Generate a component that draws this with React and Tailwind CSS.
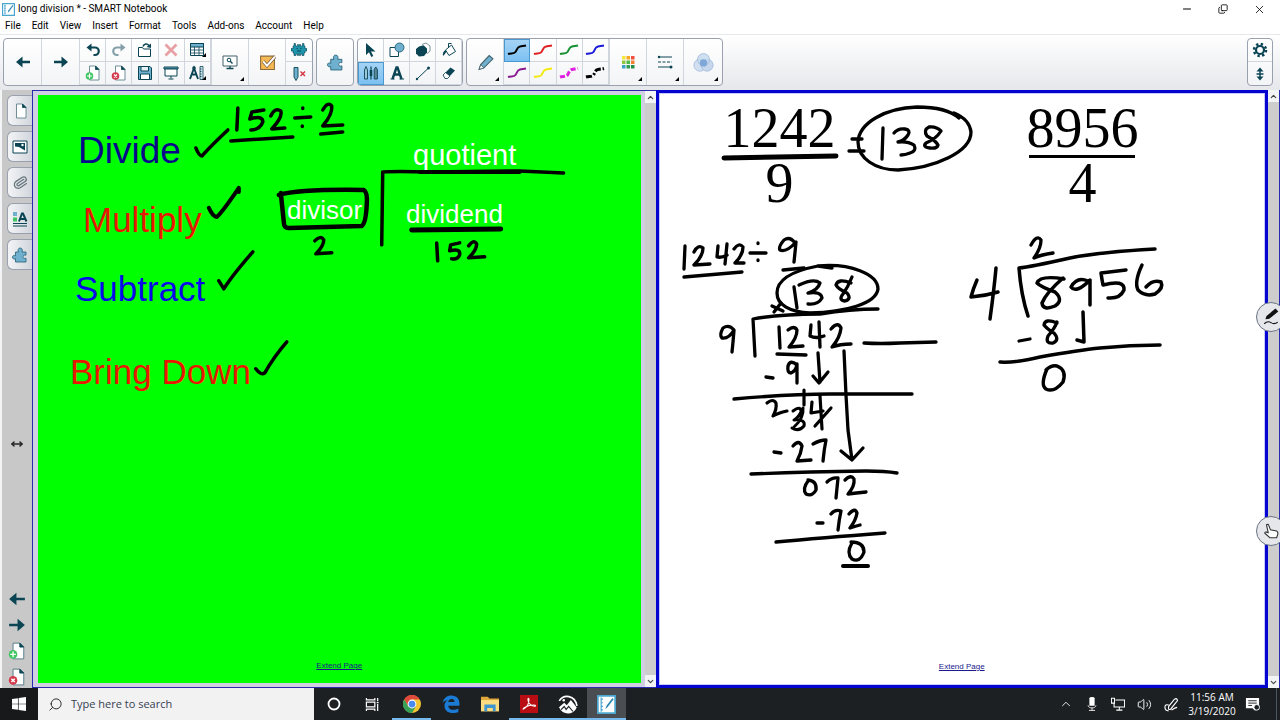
import React, { useState } from "react";
import {
  Minus,
  X,
  Search,
  ChevronUp,
  ChevronDown,
  Copy,
  MoveHorizontal,
  Paperclip,
  Volume2,
} from "lucide-react";

const DARK = "#0b4554";
const BLUE = "#6fb0cf";

/* ---------- small icons ---------- */

const Svg = ({ size = 16, children }) => (
  <svg width={size} height={size} viewBox="0 0 16 16" fill="none" aria-hidden="true">
    {children}
  </svg>
);

const ArrowIcon = ({ right, size = 16 }) => (
  <Svg size={size}>
    <path
      d={right ? "M1 6.8h7.5V2.5L15 8l-6.5 5.5V9.2H1z" : "M15 6.8H7.5V2.5L1 8l6.5 5.5V9.2H15z"}
      fill={DARK}
    />
  </Svg>
);

const UndoIcon = ({ redo }) => (
  <Svg>
    <g transform={redo ? "translate(16 0) scale(-1 1)" : undefined} opacity={redo ? 0.5 : 1}>
      <path d="M6.5 1.5 1.5 5.500l5 4z" fill={DARK} />
      <path d="M5 5.5h5a3.7 3.7 0 0 1 0 7.5H8.5" stroke={DARK} strokeWidth="2.2" />
    </g>
  </Svg>
);

const PageIcon = ({ badge, size = 16 }) => (
  <Svg size={size}>
    <path d="M4.5 1h6l3.5 3.5V15H4.5z" fill="#fff" stroke="#4d7480" strokeWidth=".8" />
    <path d="M10.5 1v3.5H14z" fill={DARK} stroke={DARK} strokeWidth=".8" />
    {badge && <circle cx="4.5" cy="11" r="3.8" fill={badge === "add" ? "#3fc561" : "#d33a4c"} />}
    {badge === "add" && <path d="M4.5 8.5v5M2 11h5" stroke="#fff" strokeWidth="1.2" />}
    {badge === "del" && <path d="m3 9.5 3 3m0-3-3 3" stroke="#fff" strokeWidth="1.3" />}
  </Svg>
);

const OpenIcon = () => (
  <Svg>
    <path d="M1.5 14.5v-9h4l1 1.5h7v7.5z" fill="#fff" stroke={DARK} />
    <path d="M6 4.5C7 1.5 10 1 12 3.5" stroke={DARK} strokeWidth="1.5" />
    <path d="m9.5 5 4.5 1V1.5z" fill={DARK} />
  </Svg>
);

const DeleteIcon = () => (
  <Svg>
    <path d="m2.5 2.5 11 11m0-11-11 11" stroke="#e8a0a4" strokeWidth="2.8" />
  </Svg>
);

const SaveIcon = () => (
  <Svg>
    <path d="M1.5 1.5H13L14.5 3v11.5h-13z" fill={BLUE} stroke={DARK} />
    <path d="M4 1.5h7.5V6H4z" fill="#e5f1f6" stroke={DARK} />
    <path d="M3.5 9h9v5.5h-9z" fill="#fff" stroke={DARK} />
  </Svg>
);

const ScreenIcon = () => (
  <Svg>
    <path d="M1 2h14v2H1z" fill={BLUE} stroke={DARK} />
    <path d="M2 4h12v7H2z" fill="#fff" stroke={DARK} />
    <path d="M8 11v2.5M5.5 14h5" stroke={DARK} />
  </Svg>
);

const TableIcon = () => (
  <Svg>
    <path d="M1.5 1.5h13v12h-13z" fill="#fff" stroke={DARK} />
    <path d="M1.5 1.5h13V5h-13z" fill={BLUE} stroke={DARK} />
    <path d="M1.5 8h13M1.5 11h13M5.5 5v8.5M10 5v8.5" stroke={DARK} strokeWidth=".8" />
  </Svg>
);

const MeasureIcon = () => (
  <Svg>
    <path d="m1 14 4-11 4 11M2.5 9.5h5" stroke={DARK} strokeWidth="1.9" />
    <circle cx="5" cy="3" r="1.8" fill={DARK} />
    <path d="M11 1.5h3v13h-3z" fill="#cfe4ee" stroke={DARK} strokeWidth=".8" />
    <path d="M11 4h1.5M11 6.5h1.5M11 9h1.5M11 11.5h1.5" stroke={DARK} strokeWidth=".8" />
  </Svg>
);

const MonitorIcon = () => (
  <Svg>
    <path d="M1 2h14v10H1z" fill="#fff" stroke="#41606b" />
    <circle cx="7" cy="6" r="1.8" stroke={DARK} />
    <path d="m8.300 7.300 2.200 2.200" stroke={DARK} strokeWidth="1.3" />
    <path d="M8 12v2.500M4.500 14.500h7" stroke={DARK} strokeWidth="1.3" />
  </Svg>
);

const AssessIcon = () => (
  <Svg size={17}>
    <path d="M1.5 2h13v12.5h-13z" fill="#f5b953" stroke="#8a6a3a" />
    <path d="m4 7 3.5 4L15 2.5" stroke="#7a6040" strokeWidth="3.2" />
    <path d="m4 7 3.5 4L15 2.5" stroke="#fff" strokeWidth="1.8" />
  </Svg>
);

const MonsterIcon = () => (
  <Svg>
    <path
      d="M3 1.500h1.500V4h2V2.500h1V4h1V2.500h1V4h2V1.500H13V4h1v2.500h2V9h-2v2h-1v2.500h-2V12h-1.500v1.500h-1V12h-1v1.500h-1V12H5v1.500H3V11H2V9H0V6.500h2V4h1z"
      fill="#1f95ab"
      stroke={DARK}
      strokeWidth=".6"
    />
    <path d="M5.500 6.500h1.200M9.300 6.500h1.200M6 9h4" stroke={DARK} strokeWidth="1.2" />
  </Svg>
);

const ClearInkIcon = () => (
  <Svg>
    <path d="M3 1.5h4V11l-2 3.5L3 11z" fill={BLUE} stroke={DARK} strokeWidth=".9" />
    <path d="m9.5 5.5 4.5 4.5m0-4.5L9.5 10" stroke="#d4323f" strokeWidth="1.4" />
  </Svg>
);

// jigsaw piece: knob on top, notches on the right and bottom, knob on the left
const PuzzleIcon = ({ size = 17 }) => (
  <Svg size={size}>
    <path
      d="M3.500 5H6.500C5.500 3 6.300 1 8.200 1s2.700 2 1.800 4H14v3.200c-1.800-.6-3 .2-3 1.500s1.200 2.100 3 1.500V15H3.500v-3.300C1.800 12.600.5 11.700.5 10.200s1.300-2.300 3-1.400z"
      fill={BLUE}
      stroke="#2f6a80"
      strokeWidth=".9"
    />
  </Svg>
);

const SelectIcon = () => (
  <Svg>
    <path d="M3 1v12l3-2.7L8.3 15l2-1L8 9.5h4.5z" fill={DARK} />
  </Svg>
);

const ShapesIcon = () => (
  <Svg>
    <path d="M1 5.5h8.5v9H1z" fill="#fff" stroke={DARK} />
    <circle cx="10.5" cy="5.5" r="4.5" fill={BLUE} stroke="#2f6a80" />
  </Svg>
);

const PolygonIcon = () => (
  <Svg>
    <path d="M7 2.5 11 1l4 3v5l-3 2.5" fill="#fff" stroke="#7d9199" />
    <path d="m4 4.5 4.5-1.2L12 6.5v4L9 14l-5 .5L1 11.5V7z" fill={DARK} />
  </Svg>
);

const FillIcon = () => (
  <Svg>
    <path d="m4.5 8 6-5 4 6.5L8 13.5z" fill="#fff" stroke={DARK} />
    <path d="M7.5 6V1.5h3" stroke={DARK} />
    <path d="M4.5 8C2 9.5 1.5 11.5 2 14c1.5-1 2.5-3 3.5-4.5z" fill={DARK} />
  </Svg>
);

const PensIcon = () => (
  <Svg>
    <path d="M1.500 14V5L3 1.500 4.500 5v9z" fill="#9cc7da" stroke={DARK} strokeWidth=".9" />
    <path d="M11.200 14V4.500l1.600-2.500 1.600 2.500V14z" fill="#5d8797" stroke={DARK} strokeWidth=".9" />
    <path d="M8 1.500v13" stroke={DARK} strokeWidth="1.2" />
    <path d="M8 5v6" stroke={DARK} strokeWidth="2.600" />
  </Svg>
);

const TextIcon = () => (
  <Svg>
    <path d="m3.5 14 4-11.5h1L12.5 14M5 9.5h6" stroke={DARK} strokeWidth="2.4" />
    <path d="M1.5 14h4M10.5 14h4.5" stroke={DARK} strokeWidth="1.2" />
  </Svg>
);

const LineIcon = () => (
  <Svg>
    <path d="M2 14 13.5 3" stroke={DARK} />
    <circle cx="2" cy="14" r="1.2" fill={DARK} />
    <circle cx="13.5" cy="3" r="1.5" fill={DARK} />
  </Svg>
);

const EraserIcon = () => (
  <Svg>
    <path d="m2 10 7.5-7.5L14 5.5l-7.5 8H4z" fill={DARK} />
    <path d="m2 10 2.5-2.5L9 11l-2.5 2.5H4z" fill="#fff" stroke={DARK} strokeWidth=".8" />
  </Svg>
);

const PencilIcon = () => (
  <Svg size={17}>
    <path d="M2 14.5 3.5 10 11.5 1.5 15 4.5 6.5 13z" fill={BLUE} stroke="#41606b" />
    <path d="M2 14.5 3.5 10l3 3z" fill="#fff" stroke="#41606b" strokeWidth=".8" />
  </Svg>
);

const LineStyle = ({ color, dash, width = 2 }) => (
  <svg width="20" height="12" viewBox="0 0 20 12" fill="none" aria-hidden="true">
    <path d="M1 10c3-1 6 0 7.5-2S10 3 13 2.5 17 2 19 1.5" stroke={color} strokeWidth={width} strokeDasharray={dash} />
  </svg>
);

const PaletteIcon = () => (
  <Svg>
    {["#f3e63c", "#f7a823", "#f04e3e", "#8ec63f", "#4fb748", "#f08030", "#3ba1c9", "#2f9e50", "#2a8a48"].map((c, i) => (
      <rect key={c} x={2 + (i % 3) * 4.5} y={2 + Math.floor(i / 3) * 4.5} width="3.5" height="3.5" fill={c} />
    ))}
  </Svg>
);

const PropsIcon = () => (
  <Svg>
    <path d="M1 3h14M1 13h14" stroke={DARK} />
    <path d="M1 8h14" stroke={DARK} strokeDasharray="3 1.5" />
    <circle cx="2" cy="3" r="1.2" fill={DARK} />
    <circle cx="14" cy="13" r="1.5" fill={DARK} />
  </Svg>
);

const CirclesIcon = () => (
  <Svg size={21}>
    <g stroke="#9fb8da" strokeWidth=".6">
      <circle cx="5.3" cy="10" r="4.600" fill="#d3e0f1" />
      <circle cx="10.7" cy="10" r="4.600" fill="#c6d6ec" />
      <circle cx="8" cy="5.8" r="4.600" fill="#c3d9ee" fillOpacity=".8" />
    </g>
    <circle cx="8" cy="8.300" r="2.800" fill="#7ea7d8" />
  </Svg>
);

const GearIcon = () => (
  <Svg>
    <circle cx="8" cy="8" r="6" stroke={DARK} strokeWidth="2.5" strokeDasharray="2.35 2.36" />
    <circle cx="8" cy="8" r="4" stroke={DARK} strokeWidth="2.2" />
  </Svg>
);

const UpDownIcon = () => (
  <Svg>
    <path d="M8 4v8M4.5 8h7" stroke={DARK} strokeWidth="1.5" />
    <path d="m8 1.5 3.5 4h-7zM8 14.5l3.5-4h-7z" fill={DARK} />
  </Svg>
);

const PictureIcon = () => (
  <Svg>
    <path d="M1 2h14v12H1z" fill="#fff" stroke={DARK} />
    <path d="M3 4h10v7.500L9.500 9.500 7 8 3 7.500z" fill={DARK} />
    <circle cx="10.5" cy="6" r="1.2" fill="#fff" />
  </Svg>
);

const PropertiesIcon = () => (
  <Svg>
    <path d="M1 1h4v4H1z" fill={BLUE} />
    <path d="M1 6.5h4v4H1z" fill="#3fc561" />
    <path d="m7 10.5 3-8h1l3.5 8M8 8h5.5" stroke={DARK} strokeWidth="2" />
    <path d="M1 12.5h14M1 15h14" stroke={DARK} />
  </Svg>
);

const NotebookIcon = ({ size = 13 }) => (
  <Svg size={size}>
    <path d="M.7.7h14.6v14.6H.7z" fill="#fff" stroke="#4aa6cf" strokeWidth="1.5" />
    <path d="M3 3.5h2M3 6.5h2M3 9.5h2M3 12.5h2M3.5 2v12" stroke="#4aa6cf" />
    <path d="m7 12 1-3 5-6.5 1 1-5 6.5z" fill="#2b85b0" />
  </Svg>
);

/* ---------- toolbar pieces ---------- */

const ToolButton = ({ label, active, menu, className = "", children, onClick }) => (
  <button
    type="button"
    aria-label={label}
    onClick={onClick}
    className={`relative flex items-center justify-center ${
      active ? "bg-gradient-to-b from-[#a6d4f5] to-[#7cc0f2] outline outline-1 -outline-offset-1 outline-[#4a98d0]" : ""
    } ${className}`}
  >
    {children}
    {menu && (
      <svg className="absolute bottom-1 right-1" width="4" height="4" viewBox="0 0 4 4" aria-hidden="true">
        <path d="M4 0v4H0z" fill="#000" />
      </svg>
    )}
  </button>
);

const Group = ({ children }) => (
  <div className="flex h-12 divide-x divide-gray-300 overflow-hidden rounded border border-gray-400 bg-gradient-to-b from-white to-gray-100">
    {children}
  </div>
);

const gridCell = "border-b border-r border-gray-300";

const editTools = [
  ["Undo", <UndoIcon />],
  ["Redo", <UndoIcon redo />],
  ["Open", <OpenIcon />],
  ["Delete", <DeleteIcon />],
  ["Table", <TableIcon />, true],
  ["Add page", <PageIcon badge="add" />],
  ["Delete page", <PageIcon badge="del" />],
  ["Save", <SaveIcon />],
  ["Screen shade", <ScreenIcon />],
  ["Measurement tools", <MeasureIcon />, true],
];

const drawTools = [
  ["Select", <SelectIcon />],
  ["Shapes", <ShapesIcon />],
  ["Regular polygons", <PolygonIcon />],
  ["Fill", <FillIcon />],
  ["Pens", <PensIcon />],
  ["Text", <TextIcon />],
  ["Lines", <LineIcon />],
  ["Eraser", <EraserIcon />],
];

const penStyles = [
  ["Black", "#000"],
  ["Red", "#e02020"],
  ["Green", "#149030"],
  ["Blue", "#1818d8"],
  ["Purple", "#8a1a90"],
  ["Yellow", "#f2ea10"],
  ["Magenta dashed", "#e020e0", "5 2", 3],
  ["Black dashed", "#000", "6 2 2 2", 3],
];

const Toolbar = () => {
  const [tool, setTool] = useState("Pens");
  const [pen, setPen] = useState("Black");

  return (
    <div className="flex h-14 items-center gap-[3px] border-t border-gray-200 bg-gradient-to-b from-white to-gray-200 pb-px pl-[3px] pr-[7px]">
      <Group>
        <ToolButton label="Previous page" className="w-[38px]"><ArrowIcon /></ToolButton>
        <ToolButton label="Next page" className="w-[38px]"><ArrowIcon right /></ToolButton>
        <div className="grid w-[132px] grid-cols-5 grid-rows-2">
          {editTools.map(([name, icon, menu]) => (
            <ToolButton key={name} label={name} menu={menu} className={gridCell}>{icon}</ToolButton>
          ))}
        </div>
        <ToolButton label="Display" menu className="w-[37px]"><MonitorIcon /></ToolButton>
        <ToolButton label="Assessment" className="w-[37px]"><AssessIcon /></ToolButton>
        <div className="grid w-[26px] grid-rows-2 divide-y divide-gray-300">
          <ToolButton label="Activity builder"><MonsterIcon /></ToolButton>
          <ToolButton label="Clear ink"><ClearInkIcon /></ToolButton>
        </div>
      </Group>

      <Group>
        <ToolButton label="Add-ons" className="w-9"><PuzzleIcon /></ToolButton>
      </Group>

      <Group>
        <div className="grid w-[104px] grid-cols-4 grid-rows-2">
          {drawTools.map(([name, icon]) => (
            <ToolButton key={name} label={name} active={tool === name} onClick={() => setTool(name)} className={gridCell}>
              {icon}
            </ToolButton>
          ))}
        </div>
      </Group>

      <Group>
        <ToolButton label="Pen type" menu className="w-[37px]"><PencilIcon /></ToolButton>
        <div className="grid w-[106px] grid-cols-4 grid-rows-2">
          {penStyles.map(([name, color, dash, width]) => (
            <ToolButton key={name} label={name} active={pen === name} onClick={() => setPen(name)} className={gridCell}>
              <LineStyle color={color} dash={dash} width={width} />
            </ToolButton>
          ))}
        </div>
        <ToolButton label="Colour" menu className="w-[37px]"><PaletteIcon /></ToolButton>
        <ToolButton label="Line properties" menu className="w-[37px]"><PropsIcon /></ToolButton>
        <ToolButton label="Transparency" menu className="w-[38px]"><CirclesIcon /></ToolButton>
      </Group>

      <div className="ml-auto">
        <Group>
          <div className="grid w-6 grid-rows-2 divide-y divide-gray-300">
            <ToolButton label="Settings"><GearIcon /></ToolButton>
            <ToolButton label="Move toolbar"><UpDownIcon /></ToolButton>
          </div>
        </Group>
      </div>
    </div>
  );
};

/* ---------- side bar ---------- */

const tabs = [
  ["Pages", <PageIcon />],
  ["Gallery", <PictureIcon />],
  ["Attachments", <Paperclip size={15} color="#66757c" className="rotate-12" />],
  ["Properties", <PropertiesIcon />],
  ["Add-ons tab", <PuzzleIcon size={16} />],
];

const SideBar = () => (
  <aside className="flex w-8 shrink-0 flex-col items-end border-l-2 border-gray-100 bg-[#c8c8c8] pb-0.5 pt-[5px]">
    <div className="flex flex-col gap-[5px]">
      {tabs.map(([name, icon]) => (
        <button
          key={name}
          type="button"
          aria-label={name}
          className="flex h-[31px] w-[25px] items-center justify-center rounded-l-md border border-r-0 border-gray-400 bg-gradient-to-r from-gray-100 to-gray-300"
        >
          {icon}
        </button>
      ))}
    </div>
    <div className="flex w-full flex-1 items-center justify-center pt-7">
      <MoveHorizontal size={12} strokeWidth={3} color="#222" />
    </div>
    <div className="flex w-full flex-col items-center gap-2">
      <button type="button" aria-label="Back"><ArrowIcon size={18} /></button>
      <button type="button" aria-label="Forward"><ArrowIcon right size={18} /></button>
      <button type="button" aria-label="Insert page"><PageIcon badge="add" size={18} /></button>
      <button type="button" aria-label="Remove page"><PageIcon badge="del" size={18} /></button>
    </div>
  </aside>
);

/* ---------- pen strokes: [path, width] ---------- */

const leftInk = [
  // ticks
  ["M196 148Q199 156 202 156Q212 145 228 130", 3.5],
  ["M209 208Q213 217 217 217Q222 213 239 188V192", 4],
  ["M219 281L224 289Q232 276 253 252", 3.5],
  ["M256 369Q261 376 265 373Q274 357 287 342", 3.5],
  // 152 / 2
  ["M238 108L237 130M264 110L252 112L250 119Q263 115 263 122Q260 130 251 130", 3.5],
  ["M271 116Q275 107 281 111Q283 117 272 129L285 128M231 141L293 137", 3.5],
  ["M295 118L311 117M303 108V108.5M302.5 126V126.5", 3.5],
  ["M323 110Q328 101 332 106Q333 114 323 126L343 125M321 134L343 132", 3.5],
  // bracket
  ["M382 245L383 172Q395 171 430 172L520 171L564 173", 3.5],
  ["M420 172H520", 4],
  // box round the divisor
  ["M279 195Q300 189 364 190Q368 192 367 205Q366 224 362 226L290 228Q284 229 284 222L281 193", 4.5],
  ["M315 241Q321 235 324 240Q324 246 316 254L332 253", 3.5],
  ["M412 230L501 229", 5],
  ["M437 243L438 261M460 243L451 245L450 251Q461 248 460 255Q458 260 452 259", 3.5],
  ["M469 246Q474 239 477 244Q477 250 469 258L485 257", 3.5],
];

const rightInk = [
  ["M724 158L836 156", 5],
  // = 138
  ["M852 139H862M849 151H864", 3.3],
  ["M959 118C950 110 935 107 917 107C885 108 859 123 858 142C858 158 875 170 898 170C935 168 971 152 971 132C970 124 966 118 954 113", 3.3],
  ["M883 128L882 159M894 133Q898 128 905 129Q911 130 908 135Q904 141 898 142Q908 141 914 145Q917 151 910 153Q905 155 901 155", 3.3],
  ["M941 131Q936 126 929 127Q923 130 927 136Q936 141 938 145Q937 149 930 148Q922 147 926 143Q936 139 941 131", 3.3],
  // 1242 / 9
  ["M685 246L684 269M694 252Q698 244 703 248Q703 256 694 265L710 264", 3.3],
  ["M718 246L717 257Q722 258 727 255M727 244L725 264M734 249Q739 242 743 247Q743 255 735 263L744 263", 3.3],
  ["M684 277L742 272M750 253H766M758 243V243.5M758 260V260.5", 3.3],
  ["M795 243Q790 236 784 240Q778 247 780 250Q786 253 796 242Q795 253 794 262M783 270L804 268", 3.3],
  // answer ring
  ["M818 266L832 268M818 266C850 263 878 274 878 289C876 304 845 312 810 313C790 312 777 305 777 293C777 280 792 271 818 266", 3.3],
  ["M772 306L783 311M774 312L781 303", 3.3],
  ["M794 287L797 308M799 285Q814 278 820 283Q818 290 808 293Q821 291 822 298Q818 305 808 304", 3.3],
  ["M851 283Q838 278 836 285Q838 289 847 293Q852 299 845 301Q838 300 843 294Q848 287 852 277", 3.3],
  // 9 into 1242
  ["M755 356L753 319Q780 314 820 314Q850 309 878 309", 3.3],
  ["M734 330Q729 324 723 328Q719 335 722 338Q729 339 734 330Q733 343 732 352", 3.3],
  ["M779 327L780 348M788 330Q794 325 797 330Q797 338 789 347L803 346M777 354L806 355", 3.3],
  ["M811 325L810 336Q816 339 824 336M819 322L820 347M831 329Q838 321 841 328Q840 338 832 347Q840 344 851 344", 3.3],
  ["M864 343Q880 344 900 343L936 342", 3.3],
  ["M766 377L773 378M797 365Q790 359 788 366Q787 373 791 373Q796 371 797 364V383", 3.3],
  ["M818 353L820 382M813 376L819 383L828 372", 3.3],
  ["M844 351L846 395L848 430L852 460M841 451L852 460L863 448", 3.3],
  ["M734 399Q790 394 830 394H912", 3.3],
  // 34 regrouped to 2 and 14
  ["M804 390V405M767 403Q773 398 776 403Q777 409 773 416Q778 413 787 411", 3.2],
  ["M793 411Q801 405 801 412Q798 418 794 420Q806 419 804 426Q799 432 792 428M794 427Q804 418 803 408", 3],
  ["M812 402L811 413L823 411M820 396L822 429M831 408L815 426", 3.2],
  ["M774 452L781 453M793 446Q799 439 802 446Q801 454 797 461L811 460M813 444Q820 440 826 440Q824 450 823 461", 3.3],
  ["M751 474Q800 472 866 471Q885 471 897 473", 3.3],
  ["M808 481Q802 489 806 494Q812 497 816 490Q817 481 808 480M827 482Q832 477 838 478Q837 488 836 498", 3.3],
  ["M845 480Q851 474 854 479Q855 486 848 494Q856 493 866 492", 3.3],
  ["M817 523H823M831 514Q835 509 841 511Q839 520 838 530M849 514Q855 507 857 513Q856 520 850 528Q856 526 860 525", 3.3],
  ["M776 542Q820 538 885 533M852 543Q846 553 852 559Q860 563 864 552Q864 542 851 542", 3.3],
  ["M843 566H868", 4],
  // 4 into 8956
  ["M1031 245Q1037 234 1041 240Q1041 248 1034 258Q1040 255 1053 253", 3.3],
  ["M977 280Q973 289 971 297Q985 296 998 292M996 268Q994 290 990 319", 3.5],
  ["M1028 316Q1021 295 1019 268Q1030 267 1070 258Q1100 252 1155 249", 3.5],
  ["M1064 279Q1040 275 1037 283Q1041 287 1055 292Q1064 300 1055 306Q1043 311 1042 303Q1046 293 1063 278", 3.5],
  ["M1088 281Q1077 276 1071 287Q1076 294 1090 280V305", 3.5],
  ["M1126 270L1101 273Q1102 280 1103 285Q1125 279 1124 290Q1120 299 1108 298", 3.5],
  ["M1142 265Q1134 282 1138 290Q1145 297 1155 294Q1164 288 1161 282Q1153 279 1146 287", 3.5],
  ["M1019 341L1030 339M1057 323Q1045 318 1044 325Q1047 329 1054 333Q1060 340 1053 343Q1045 344 1048 336Q1055 328 1057 322", 3.3],
  ["M1083 312L1084 342L1077 340", 3.5],
  ["M1000 362Q1015 363 1040 357Q1080 350 1100 348Q1130 345 1160 345", 3.5],
  ["M1047 369Q1040 385 1046 389Q1054 393 1063 382Q1067 370 1057 366Q1051 365 1046 370", 3.5],
];

const Ink = ({ strokes, viewBox, label }) => (
  <svg
    className="pointer-events-none absolute inset-0 h-full w-full"
    viewBox={viewBox}
    preserveAspectRatio="xMinYMin meet"
    fill="none"
    stroke="#000"
    strokeLinecap="round"
    strokeLinejoin="round"
    role="img"
    aria-label={label}
  >
    {strokes.map(([d, w]) => (
      <path key={d} d={d} strokeWidth={w} />
    ))}
  </svg>
);

const ScrollBar = () => (
  <div className="flex w-[11px] shrink-0 flex-col items-center justify-between bg-[#cdcdcd]">
    <button type="button" aria-label="Scroll up" className="flex h-3 w-full items-center justify-center bg-gray-100">
      <ChevronUp size={9} strokeWidth={3} color="#444" />
    </button>
    <button type="button" aria-label="Scroll down" className="flex h-3 w-full items-center justify-center bg-gray-100">
      <ChevronDown size={9} strokeWidth={3} color="#444" />
    </button>
  </div>
);

const ExtendPage = () => (
  <a href="#extend" className="absolute inset-x-0 bottom-3 text-center text-[8px] leading-[10px] text-[#1a1a8c] underline">
    Extend Page
  </a>
);

const LeftPage = () => (
  <section className="flex min-w-0 flex-1 border-y border-[#2a2ab0]">
    <div className="flex flex-1 border-l border-[#2a2ab0] bg-[#d0d0e2] py-1 pl-[5px] pr-1">
      <div className="relative flex-1 overflow-hidden bg-[#00ff00] font-['Liberation_Sans',Arial,sans-serif] whitespace-nowrap">
        <p className="absolute left-10 top-9 text-[37px] leading-10 text-[#08088a]">Divide</p>
        <p className="absolute left-[45px] top-[105px] text-[35px] leading-10 text-[#e81800]">Multiply</p>
        <p className="absolute left-[37px] top-[174px] text-[35px] leading-10 text-[#0808e8]">Subtract</p>
        <p className="absolute left-8 top-[257px] text-[35px] leading-10 text-[#e81800]">Bring Down</p>
        <p className="absolute left-[375px] top-11 text-[29px] leading-8 text-white">quotient</p>
        <p className="absolute left-[249px] top-[99px] text-[26px] leading-8 text-white">divisor</p>
        <p className="absolute left-[368px] top-[103px] text-[26px] leading-8 text-white">dividend</p>
        <Ink strokes={leftInk} viewBox="38 95 603 588" label="Pen notes on the steps of 152 ÷ 2" />
        <ExtendPage />
      </div>
    </div>
    <ScrollBar />
  </section>
);

const RightPage = () => (
  <section className="flex min-w-0 flex-1 border-r border-[#2a2ab0]">
    <div className="flex flex-1 border-[3px] border-[#0404d0] bg-[#c8c8fa] p-px">
      <div className="relative flex-1 overflow-hidden bg-white font-['Liberation_Serif','Times_New_Roman',serif] text-[56px] leading-[55px] text-black">
        <div className="absolute left-16 top-[7px] flex flex-col items-center">
          <p>1242</p>
          <p>9</p>
        </div>
        <div className="absolute left-[367px] top-[7px] flex flex-col items-center">
          <p>8956</p>
          <span className="absolute left-0.5 right-1 top-[54px] h-[3px] bg-black" />
          <p>4</p>
        </div>
        <Ink strokes={rightInk} viewBox="660 94 604 590" label="Pen working of 1242 ÷ 9 = 138 and 8956 ÷ 4" />
        <div className="font-['Liberation_Sans',Arial,sans-serif]">
          <ExtendPage />
        </div>
      </div>
    </div>
    <ScrollBar />
  </section>
);

/* ---------- task bar ---------- */

const ChromeLogo = () => (
  <Svg size={18}>
    <circle cx="8" cy="8" r="8" fill="#f2c430" />
    <path d="M1.07 4A8 8 0 0 1 14.93 4H8L4.54 10z" fill="#de4a3c" />
    <path d="M1.07 4A8 8 0 0 0 8 16l3.46-6H4.54z" fill="#37a158" />
    <circle cx="8" cy="8" r="3.9" fill="#fff" />
    <circle cx="8" cy="8" r="3" fill="#4a8af0" />
  </Svg>
);

const EdgeLogo = () => (
  <Svg size={18}>
    <path
      d="M.5 7C1.3 2.8 4.3.5 8.3.5c4.7 0 7.2 3.2 7.2 7v2H5.5c.2 2.5 2.3 3.7 4.7 3.7 1.6 0 3-.4 4.3-1.2v3c-1.4.7-3 1-4.8 1C5.3 16 2.2 13.5 2.2 9.7c0-2.2 1.1-4.1 3-5.2C3 4.8 1.500 5.700.5 7zm5-.7h5.700c0-1.800-1-2.800-2.700-2.800s-2.800 1.200-3 2.800z"
      fill="#1b7ad4"
    />
  </Svg>
);

const FolderLogo = () => (
  <Svg size={18}>
    <path d="M0 1.5h6L7.5 3H16v11.5H0z" fill="#e0a83a" />
    <path d="M0 4.5h16v10H0z" fill="#fbdc80" />
    <path d="M3 14.5v-6h10v6h-2.5v-3h-5v3z" fill="#3f95cf" />
  </Svg>
);

const AcrobatLogo = () => (
  <Svg size={18}>
    <path d="M0 0h16v16H0z" fill="#b80d12" />
    <path d="M3 12.5c3-1.5 5-5 5-8.5 0-1.5-1-1.5-1 0 0 3 3 6 6 6 1.5 0 1-1.2-.5-1.2-3.5 0-7 1.2-9 2.7-1 1-.8 1.6-.5 1z" stroke="#fff" strokeWidth=".9" />
  </Svg>
);

const MountainLogo = () => (
  <Svg size={20}>
    <path d="M1 5.500C4.500 0 13.500.5 15.200 9.500" stroke="#fff" strokeWidth="1.300" />
    <circle cx="4.600" cy="5" r="1" fill="#fff" />
    <path d="M.8 10.500 5 7l2 2 3.300-4.300 4.700 6C13.500 14 11 15.500 8 15.500S2.300 13.800.8 10.500z" fill="#fff" />
    <path d="m2.500 12.500 2.500-2.500 1.500 2.500L8.500 10l3.500 4" stroke="#1c2126" strokeWidth=".9" />
  </Svg>
);

const taskApps = [
  ["Cortana", <Svg size={16}><circle cx="8" cy="8" r="5.500" stroke="#fff" strokeWidth="1.8" /></Svg>],
  ["Task view", <Svg size={15}><path d="M1.5 5.5h9v5h-9zM1.5 1v2h9V1M1.5 15v-2h9v2M13.5 1v3.5M13.5 7.5V15M12.5 6h2" stroke="#fff" strokeWidth="1.3" /></Svg>],
  ["Chrome", <ChromeLogo />, true],
  ["Edge", <EdgeLogo />],
  ["File Explorer", <FolderLogo />],
  ["Acrobat", <AcrobatLogo />, true],
  ["Camera view", <MountainLogo />, true],
  ["SMART Notebook", <NotebookIcon size={19} />, true],
];

const TaskBar = () => (
  <footer className="flex h-8 shrink-0 items-stretch bg-[#1c2023] text-white">
    <button type="button" aria-label="Start" className="flex w-[38px] items-center justify-center bg-[#17191b]">
      <Svg size={14}>
        <path d="M0 2.3 6.8 1.3V7.6H0zM7.6 1.2 16 0V7.6H7.6zM0 8.4h6.8v6.3L0 13.7zM7.6 8.4H16V16L7.6 14.8z" fill="#fff" />
      </Svg>
    </button>
    <label className="flex w-[276px] items-center gap-2 bg-[#f2f2f2] pl-[10px]">
      <Search size={15} strokeWidth={1.5} color="#222" className="-scale-x-100" />
      <input
        type="text"
        aria-label="Search"
        placeholder="Type here to search"
        className="min-w-0 flex-1 bg-transparent text-[11px] text-gray-700 outline-none placeholder:text-gray-700"
      />
    </label>
    {taskApps.map(([name, icon, running]) => (
      <button
        key={name}
        type="button"
        aria-label={name}
        className={`flex w-[39px] items-center justify-center ${running ? "border-b-2 border-[#76b9ed] pt-0.5" : ""} ${
          name === "SMART Notebook" ? "bg-[#4a4e52]" : ""
        }`}
      >
        {icon}
      </button>
    ))}
    <div className="ml-auto flex items-center">
      <ChevronUp size={14} strokeWidth={1.5} className="mr-3" />
      <Svg size={14}>
        <path d="M5 1.5Q5 0 8 0t3 1.5V10H5z" fill="#fff" />
        <path d="M3.5 9.5c0 4 9 4 9 0M8 12.5V15M4.5 15.3h7" stroke="#fff" />
      </Svg>
      <span className="ml-3">
        <Svg size={14}>
          <path d="M5 3.5h10.5v8H3.5V7M9.5 11.5V15M6 15h7M.5 1.5H4V7H.5z" stroke="#fff" strokeWidth="1.2" />
        </Svg>
      </span>
      <Volume2 size={15} strokeWidth={1.5} className="ml-3" />
      <span className="ml-3">
        <Svg size={15}>
          <path d="M5 10 11 2.5q2-1.5 3 0T13.5 5L7 13q-3 1.5-2-3zM5 8.5q-4-1-4 2.5t4 4M8 14q4-3 6-3" stroke="#fff" strokeWidth="1.2" />
        </Svg>
      </span>
      <time className="ml-2 w-[50px] text-center text-[10px] leading-[14px] whitespace-nowrap">
        <span className="block">11:56 AM</span>
        <span className="block">3/19/2020</span>
      </time>
      <button type="button" aria-label="Notifications" className="ml-2 mr-4">
        <Svg size={15}>
          <path d="M1 1h14v11h-4v3l-3-3H1z" fill="#fff" />
          <path d="M3.5 4h9M3.5 6.5h9M3.5 9h4" stroke="#1c2023" />
          <circle cx="12.5" cy="11" r="3" fill="#1c2023" stroke="#fff" />
        </Svg>
      </button>
      <span className="mr-[3px] h-8 w-px bg-gray-600" />
    </div>
  </footer>
);

const menus = ["File", "Edit", "View", "Insert", "Format", "Tools", "Add-ons", "Account", "Help"];

const App = () => {
  return (
    <div className="flex h-screen flex-col overflow-hidden bg-white font-['Open_Sans','Noto_Sans',sans-serif] text-black">
      <header className="shrink-0">
        <div className="flex h-[18px] items-center pl-[2px]">
          <NotebookIcon />
          <h1 className="ml-[3px] font-['Roboto',sans-serif] text-[10px] leading-4">long division * - SMART Notebook</h1>
          <div className="ml-auto flex items-center gap-[25px] pr-[14px]">
            <button type="button" aria-label="Minimize"><Minus size={12} strokeWidth={2} /></button>
            <button type="button" aria-label="Restore"><Copy size={10} strokeWidth={2} className="-scale-y-100" /></button>
            <button type="button" aria-label="Close"><X size={13} strokeWidth={1.5} /></button>
          </div>
        </div>
        <nav className="flex h-4 items-center gap-[11px] pl-[5px] font-['Roboto',sans-serif] text-[10px] leading-4">
          {menus.map((name) => (
            <button key={name} type="button">{name}</button>
          ))}
        </nav>
        <Toolbar />
      </header>

      <main className="relative flex min-h-0 flex-1 overflow-hidden">
        <SideBar />
        <LeftPage />
        <RightPage />

        {/* floating handles on the window edge */}
        <button type="button" aria-label="Pen layer" className="absolute -right-1.5 top-[212px] flex size-[30px] items-center justify-center rounded-full border border-gray-500 bg-gray-200">
          <Svg size={18}>
            <path d="m3 10 1-3 8-6.5 2.5 2.5-8 6.5z" fill="#111" />
            <path d="M2 14q3-3 6-1t6-.5" stroke="#111" />
          </Svg>
        </button>
        <button type="button" aria-label="Touch layer" className="absolute -right-1.5 top-[426px] flex size-[30px] items-center justify-center rounded-full border border-gray-500 bg-gray-200">
          <Svg size={18}>
            <path d="M4 2.5q1.5-1 2 .5l1.5 4L13 8q1.5 1 1 3l-1 3H7L2.5 10q0-1.5 1.5-1l1.5.5z" fill="#fff" stroke="#333" />
          </Svg>
        </button>
      </main>

      <TaskBar />
    </div>
  );
};

export default App;
